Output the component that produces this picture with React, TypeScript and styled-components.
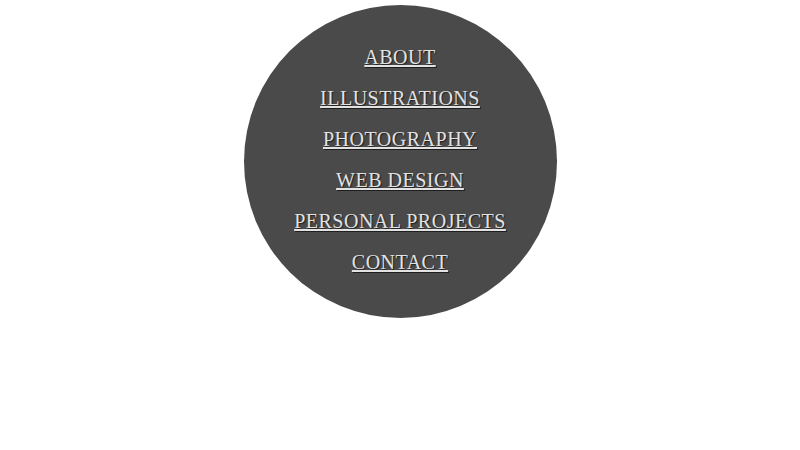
import React from 'react';
import styled, { createGlobalStyle } from 'styled-components';

const GlobalStyle = createGlobalStyle`
  html, body {
    margin: 0;
    padding: 0;
    background: #ffffff;
    font-family: "Liberation Serif", "Times New Roman", serif;
  }
`;

const Page = styled.div`
  width: 800px;
  height: 450px;
  display: flex;
  justify-content: center;
  align-items: flex-start;
  padding-top: 5px;
  box-sizing: border-box;
`;

const Circle = styled.nav`
  width: 313px;
  height: 313px;
  border-radius: 50%;
  background: #4a4a4a;
  display: flex;
  flex-direction: column;
  align-items: center;
  padding-top: 32px;
  box-sizing: border-box;
`;

const MenuLink = styled.a`
  font-size: 20px;
  line-height: 41px;
  color: #e2e2e2;
  text-decoration: underline;
  text-shadow: 1px 1px 1px #1e1e1e;
  letter-spacing: 0.5px;
`;

const items = ['ABOUT', 'ILLUSTRATIONS', 'PHOTOGRAPHY', 'WEB DESIGN', 'PERSONAL PROJECTS', 'CONTACT'];

export default function App() {
  return (
    <>
      <GlobalStyle />
      <Page>
        <Circle>
          {items.map((item) => (
            <MenuLink key={item} href="#">
              {item}
            </MenuLink>
          ))}
        </Circle>
      </Page>
    </>
  );
}
